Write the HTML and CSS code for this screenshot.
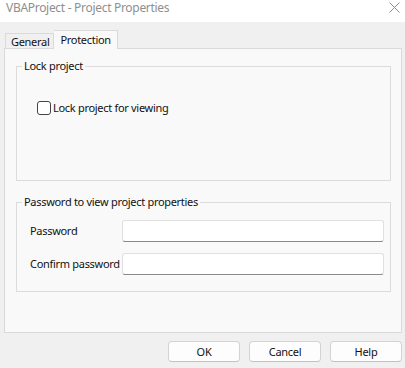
FILE: index.html
```html
<!DOCTYPE html>
<html lang="en">
<head>
   <meta charset="UTF-8">
   <title>VBAProject - Project Properties</title>
   <link rel="stylesheet" href="styles.css">
</head>
<body>
<div class="window">
   <div class="titlebar">
      <span class="title">VBAProject - Project Properties</span>
      <svg class="close" width="11" height="11" viewBox="0 0 11 11">
         <path d="M0.5 0.5 L10.5 10.5 M10.5 0.5 L0.5 10.5" stroke="#8c8c8c" stroke-width="1" fill="none"/>
      </svg>
   </div>

   <div class="dialog">
      <div class="tabs">
         <div class="tab">General</div>
         <div class="tab active">Protection</div>
      </div>

      <div class="panel">
         <fieldset class="group">
            <legend>Lock project</legend>
            <div class="group-body lock-body">
               <label class="check-row">
                  <span class="checkbox"></span>
                  <span>Lock project for viewing</span>
               </label>
            </div>
         </fieldset>

         <fieldset class="group group-password">
            <legend>Password to view project properties</legend>
            <div class="group-body password-body">
               <div class="field-row">
                  <span class="field-label">Password</span>
                  <span class="input"></span>
               </div>
               <div class="field-row">
                  <span class="field-label">Confirm password</span>
                  <span class="input"></span>
               </div>
            </div>
         </fieldset>
      </div>

      <div class="buttons">
         <button class="btn">OK</button>
         <button class="btn">Cancel</button>
         <button class="btn">Help</button>
      </div>
   </div>
</div>
</body>
</html>
```

FILE: styles.css
```css
body {
   font: 11px/16px "Noto Sans", "Liberation Sans", sans-serif;
   letter-spacing: -0.3px;
   margin: 0;
   padding: 0;
   color: #111;
   background: #f0f0f0;
}

.window {
   width: 405px;
   height: 368px;
   overflow: hidden;
}

.titlebar {
   display: flex;
   justify-content: space-between;
   align-items: flex-start;
   height: 22px;
   background: #ffffff;
   padding: 0 5px 0 6px;
   box-sizing: border-box;
}

.title {
   color: #8f8f8f;
   font-size: 12px;
}

.close {
   margin-top: 2px;
}

.dialog {
   padding: 8px 3px 0 4px;
}

.tabs {
   display: flex;
   align-items: flex-end;
   padding-left: 1px;
   margin-bottom: -1px;
}

.tab {
   height: 14px;
   line-height: 16px;
   padding: 0 4px 0 5px;
   margin-bottom: 1px;
   border: 1px solid #dadada;
   border-bottom: none;
   background: #f0f0f0;
}

.tab.active {
   position: relative; /* над рамкой панели */
   z-index: 1;
   height: 18px;
   line-height: 18px;
   padding: 0 6px;
   margin-bottom: 0;
   border-left: none;
   background: #f9f9f9;
}

.panel {
   background: #f9f9f9;
   border: 1px solid #dadada;
   padding: 9px 10px 40px 11px;
}

.group {
   margin: 0;
   padding: 0;
   border: 1px solid #dcdcdc;
}

.group legend {
   margin-left: 5px;
   padding: 0 2px;
}

.lock-body {
   padding: 26px 0 64px 20px;
}

.check-row {
   display: flex;
   align-items: center;
   height: 16px;
}

.checkbox {
   width: 12px;
   height: 12px;
   border: 1px solid #444;
   border-radius: 3px;
   background: #fff;
   margin-right: 2px;
}

.group-password {
   margin-top: 13px;
}

.password-body {
   padding: 10px 6px 16px 13px;
}

.field-row {
   display: flex;
   align-items: center;
}

.field-row + .field-row {
   margin-top: 11px;
}

.field-label {
   width: 92px;
   white-space: nowrap;
}

.input {
   flex: 1;
   height: 20px;
   background: #fff;
   border: 1px solid #e0e0e0;
   border-bottom-color: #8a8a8a;
   border-radius: 3px;
}

.buttons {
   display: flex;
   justify-content: flex-end;
   gap: 9px;
   margin-top: 8px;
}

.btn {
   width: 72px;
   height: 21px;
   padding: 0;
   font: inherit;
   letter-spacing: inherit;
   color: #111;
   background: #fdfdfd;
   border: 1px solid #d3d3d3;
   border-bottom-color: #c2c2c2;
   border-radius: 4px;
}
```
